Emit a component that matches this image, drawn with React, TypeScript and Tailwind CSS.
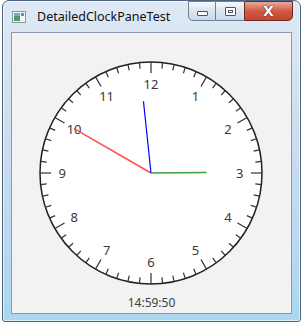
import React from "react";

const R = 111;
const CX = 139;
const CY = 140;

function Clock() {
  const ticks = [];
  for (let i = 0; i < 60; i++) {
    const a = (i * Math.PI) / 30;
    const len = i % 5 === 0 ? R * 0.1 : R * 0.055;
    const s = Math.sin(a);
    const c = Math.cos(a);
    ticks.push(
      <line key={i} x1={CX + R * s} y1={CY - R * c} x2={CX + (R - len) * s} y2={CY - (R - len) * c}
        stroke="#333" strokeWidth={1.2} />
    );
  }
  const nums = [];
  for (let h = 1; h <= 12; h++) {
    const a = (h * Math.PI) / 6;
    nums.push(
      <text key={h} x={CX + R * 0.8 * Math.sin(a)} y={CY - R * 0.8 * Math.cos(a)} textAnchor="middle"
        dominantBaseline="central" fontSize={13} fill="#3a3a3a" fontFamily="'Noto Sans', sans-serif">{h}</text>
    );
  }
  const hand = (angDeg: number, len: number) => {
    const a = (angDeg * Math.PI) / 180;
    return { x2: CX + len * Math.sin(a), y2: CY - len * Math.cos(a) };
  };
  const sec = hand(50 * 6, R * 0.8);
  const min = hand(59 * 6, R * 0.65);
  const hr = hand((2 + 59 / 60) * 30, R * 0.5);
  return (
    <svg width={278} height={260} className="block">
      <circle cx={CX} cy={CY} r={R} fill="#fff" stroke="#222" strokeWidth={1.5} />
      {ticks}
      {nums}
      <line x1={CX} y1={CY} {...sec} stroke="#ff4d4d" strokeWidth={1.5} />
      <line x1={CX} y1={CY} {...min} stroke="#0000ff" strokeWidth={1.2} />
      <line x1={CX} y1={CY} {...hr} stroke="#3aa03a" strokeWidth={1.5} />
    </svg>
  );
}

function CaptionButtons() {
  return (
    <div className="flex h-[20px] mr-[7px]">
      <div className="w-[28px] h-full rounded-bl-[5px] border border-[#6d7f95] bg-gradient-to-b from-[#f3f7fb] via-[#dbe6f2] to-[#c9d9ea] flex items-center justify-center">
        <div className="w-[11px] h-[5px] mt-[5px] rounded-[1px] border border-[#4a5563] bg-white" />
      </div>
      <div className="w-[28px] h-full border-y border-[#6d7f95] bg-gradient-to-b from-[#f3f7fb] via-[#dbe6f2] to-[#c9d9ea] flex items-center justify-center">
        <div className="w-[11px] h-[9px] rounded-[1px] border border-[#4a5563] bg-white flex items-center justify-center">
          <div className="w-[5px] h-[3px] border border-[#4a5563]" />
        </div>
      </div>
      <div className="w-[49px] h-full rounded-br-[5px] border border-[#6b2a22] bg-gradient-to-b from-[#e9a89a] via-[#d05a44] to-[#c8432c] flex items-center justify-center">
        <span className="text-white font-bold text-[14px] leading-none [text-shadow:0_0_1px_#3a1410,0_0_1px_#3a1410]"
          style={{ fontFamily: "'DejaVu Sans', sans-serif" }}>X</span>
      </div>
    </div>
  );
}

export default function App() {
  return (
    <div className="w-[305px] h-[329px] bg-white overflow-hidden pt-0 pl-[2px]">
      <div className="w-[299px] h-[322px] rounded-t-[7px] rounded-b-[3px] border border-[#4d6580] bg-gradient-to-b from-[#dfe9f5] via-[#c9dbee] to-[#aad6f0] shadow-[inset_0_0_0_1px_rgba(255,255,255,0.6)] flex flex-col">
        <div className="h-[31px] flex items-start justify-between">
          <div className="flex items-center pt-[10px] pl-[9px] gap-[11px]">
            <svg width={14} height={12}>
              <rect x={0.5} y={0.5} width={13} height={11} fill="#f4f6f8" stroke="#8a96a4" />
              <rect x={2} y={2} width={6} height={8} fill="#4a9a6a" />
              <rect x={2} y={2} width={6} height={3} fill="#6fb0d0" />
              <rect x={9} y={2} width={3} height={3} fill="#5b8ec0" />
            </svg>
            <span className="text-[12.5px] text-[#111] leading-none" style={{ fontFamily: "'Noto Sans', sans-serif" }}>
              DetailedClockPaneTest
            </span>
          </div>
          <CaptionButtons />
        </div>
        <div className="ml-[8px] w-[281px] h-[282px] border border-[#8d9bab] bg-[#f2f2f2] flex flex-col">
          <Clock />
          <div className="h-[20px] flex items-center justify-center text-[12px] text-[#3b3f4a]"
            style={{ fontFamily: "'Noto Sans', sans-serif" }}>
            14:59:50
          </div>
        </div>
      </div>
    </div>
  );
}
